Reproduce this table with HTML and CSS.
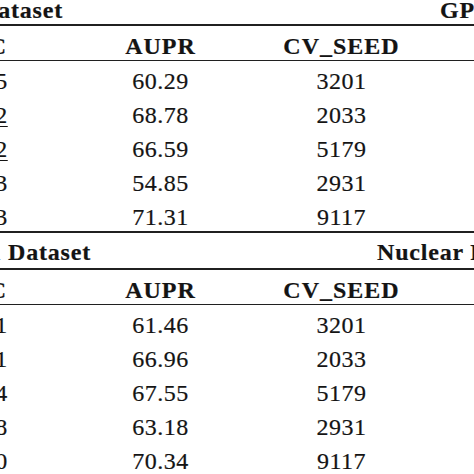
FILE: index.html
```html
<!DOCTYPE html>
<html>
<head>
<meta charset="utf-8">
<link rel="stylesheet" href="styles.css">
</head>
<body>
<div class="page">
  <section class="block block--first">
    <div class="title-row">
      <div class="group-title group-title--left"><span>Enzyme Dataset</span></div>
      <span class="group-title group-title--right">GPCR Dataset</span>
    </div>
    <div class="rule rule--thick"></div>
    <div class="row row--head"><span>AUC</span><span>AUPR</span><span>CV_SEED</span></div>
    <div class="rule rule--thin"></div>
    <div class="row"><span>94.75</span><span>60.29</span><span>3201</span></div>
    <div class="row"><span class="best">95.12</span><span>68.78</span><span>2033</span></div>
    <div class="row"><span class="best">95.12</span><span>66.59</span><span>5179</span></div>
    <div class="row"><span>93.83</span><span>54.85</span><span>2931</span></div>
    <div class="row"><span>94.93</span><span>71.31</span><span>9117</span></div>
    <div class="rule rule--thick"></div>
  </section>
  <section class="block block--second">
    <div class="title-row">
      <div class="group-title group-title--left"><span>Ion Channel Dataset</span></div>
      <span class="group-title group-title--right">Nuclear Receptor Dataset</span>
    </div>
    <div class="rule rule--thick"></div>
    <div class="row row--head"><span>AUC</span><span>AUPR</span><span>CV_SEED</span></div>
    <div class="rule rule--thin"></div>
    <div class="row"><span>96.31</span><span>61.46</span><span>3201</span></div>
    <div class="row"><span>96.51</span><span>66.96</span><span>2033</span></div>
    <div class="row"><span>96.64</span><span>67.55</span><span>5179</span></div>
    <div class="row"><span>96.28</span><span>63.18</span><span>2931</span></div>
    <div class="row"><span>96.70</span><span>70.34</span><span>9117</span></div>
    <div class="rule rule--thick"></div>
  </section>
</div>
</body>
</html>
```
FILE: styles.css
```css
html, body {
  margin: 0;
  padding: 0;
  background: #ffffff;
}

body {
  font-family: "Liberation Serif", "Times New Roman", serif;
  font-size: 24px;
  letter-spacing: 0.5px;
  color: #141414;
  overflow: hidden;
  -webkit-text-stroke: 0.2px #141414;
}

.page {
  width: 474px;
  height: 474px;
  overflow: hidden;
}

.block {
  margin-left: -111px;
  width: 720px;
}

.title-row {
  display: flex;
  white-space: nowrap;
  font-weight: bold;
  letter-spacing: 0.8px;
}

.block--first .title-row {
  line-height: 20px;
  padding-bottom: 4px;
}

.block--second .title-row {
  line-height: 24px;
  padding-top: 7px;
  padding-bottom: 4px;
}

.group-title--left {
  flex: 0 0 auto;
  display: flex;
  justify-content: flex-end;
}

.group-title--left span {
  flex: 0 0 auto;
}

.block--first .group-title--left {
  width: 174px;
}

.block--second .group-title--left {
  width: 202px;
}

.block--first .group-title--right {
  margin-left: 377px;
}

.block--second .group-title--right {
  margin-left: 286px;
}

.rule {
  background: #202020;
}

.rule--thick {
  height: 2px;
}

.rule--thin {
  height: 1px;
}

.row {
  display: grid;
  grid-template-columns: repeat(3, 181px);
  padding-top: 8px;
  padding-bottom: 2px;
  line-height: 24px;
  text-align: center;
  white-space: nowrap;
}

.row--head {
  font-weight: bold;
  letter-spacing: 1px;
}

.best {
  text-decoration: underline;
  text-decoration-thickness: 1px;
  text-underline-offset: 3px;
}
```
